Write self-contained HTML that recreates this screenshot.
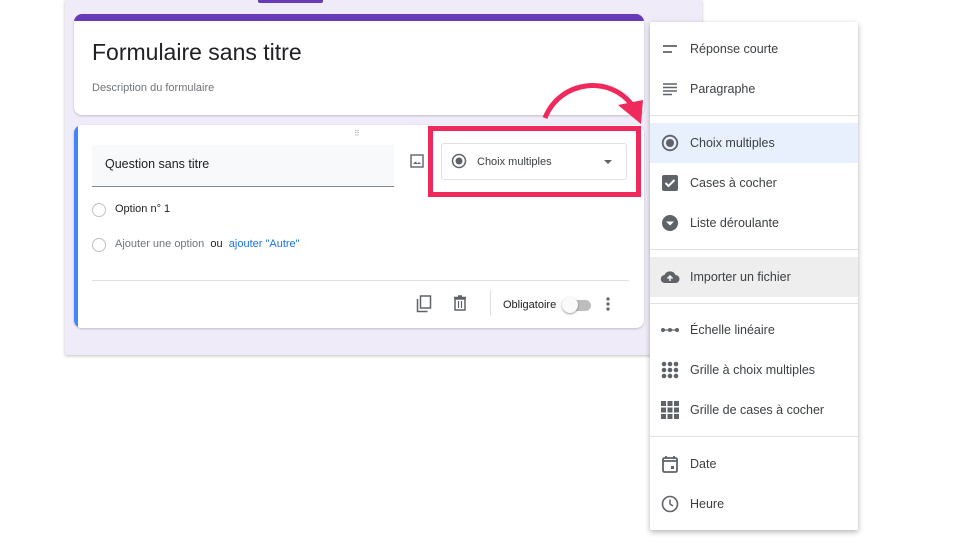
<!DOCTYPE html>
<html><head><meta charset="utf-8"><style>
*{margin:0;padding:0;box-sizing:border-box}
body{width:980px;height:551px;background:#fff;position:relative;overflow:hidden;font-family:"Liberation Sans",sans-serif;color:#202124}
.abs{position:absolute}
.panel{left:65px;top:0;width:637px;height:355px;background:#f0ebf8;box-shadow:0 1px 3px rgba(0,0,0,.25)}
.card{background:#fff;border-radius:8px;box-shadow:0 1px 2px rgba(0,0,0,.2)}
.mi{position:absolute;left:0;width:208px;height:40px;display:flex;align-items:center;font-size:12.5px;color:#3c4043}
.mi .ic{width:40px;display:flex;justify-content:center;margin-left:0}
.mi span{margin-left:0}
.div{position:absolute;left:0;width:208px;height:1px;background:#e0e0e0}
</style></head><body>
<div class="abs panel"></div>
<div class="abs" style="left:258px;top:0;width:65px;height:3px;background:#673ab7;border-radius:0 0 2px 2px"></div>
<div class="abs card" style="left:74px;top:14px;width:570px;height:101px;overflow:hidden">
  <div style="height:7px;background:#673ab7"></div>
  <div class="abs" style="left:18px;top:25px;font-size:23px;color:#202124">Formulaire sans titre</div>
  <div class="abs" style="left:18px;top:68px;font-size:11px;color:#70757a">Description du formulaire</div>
</div>
<div class="abs card" style="left:74px;top:125px;width:570px;height:203px;overflow:hidden">
  <div class="abs" style="left:0;top:0;width:4px;height:203px;background:#4285f4"></div>
  <div class="abs" style="left:280px;top:4px;font-size:8px;color:#aaa;letter-spacing:1px">⠿</div>
  <div class="abs" style="left:18px;top:20px;width:302px;height:42px;background:#f8f9fa;border-bottom:1px solid #80868b"></div>
  <div class="abs" style="left:31px;top:32px;font-size:12.5px;color:#202124">Question sans titre</div>
  <svg class="abs" style="left:336px;top:29px" width="14" height="14" viewBox="0 0 14 14"><rect x="1" y="1" width="12" height="12" fill="none" stroke="#5f6368" stroke-width="1.4"/><path d="M3 10l2.5-2.5 2 2 1.5-1.5 2 2z" fill="#5f6368"/></svg>
  <div class="abs" style="left:367px;top:18px;width:186px;height:37px;border:1px solid #e0e0e0;border-radius:3px"></div>
  <svg class="abs" style="left:377px;top:28px" width="16" height="16" viewBox="0 0 16 16"><circle cx="8" cy="8" r="6.5" fill="none" stroke="#5f6368" stroke-width="1.5"/><circle cx="8" cy="8" r="3.5" fill="#5f6368"/></svg>
  <div class="abs" style="left:403px;top:31px;font-size:11px;color:#3c4043">Choix multiples</div>
  <div class="abs" style="left:530px;top:35px;width:0;height:0;border-left:4px solid transparent;border-right:4px solid transparent;border-top:4px solid #5f6368"></div>
  <div class="abs" style="left:18px;top:78px;width:14px;height:14px;border:1.5px solid #bdc1c6;border-radius:50%"></div>
  <div class="abs" style="left:41px;top:78px;font-size:11px;color:#202124">Option n° 1</div>
  <div class="abs" style="left:18px;top:113px;width:14px;height:14px;border:1.5px solid #bdc1c6;border-radius:50%"></div>
  <div class="abs" style="left:41px;top:113px;font-size:11px;color:#70757a">Ajouter une option <span style="color:#202124">&nbsp;ou&nbsp;</span> <span style="color:#1a73e8">ajouter "Autre"</span></div>
  <div class="abs" style="left:18px;top:155px;width:537px;height:1px;background:#e0e0e0"></div>
  <svg class="abs" style="left:342px;top:170px" width="16" height="18" viewBox="0 0 16 18"><rect x="4.5" y="1" width="10" height="12" fill="none" stroke="#5f6368" stroke-width="1.5"/><path d="M1.5 4v12.5h10" fill="none" stroke="#5f6368" stroke-width="1.5"/></svg>
  <svg class="abs" style="left:379px;top:170px" width="14" height="16" viewBox="0 0 14 16"><path d="M2 4h10v11H2z M1 2.5h12 M5 1h4" fill="none" stroke="#5f6368" stroke-width="1.5"/><path d="M5.5 6v7M8.5 6v7" stroke="#5f6368" stroke-width="1.2"/></svg>
  <div class="abs" style="left:416px;top:165px;width:1px;height:26px;background:#e0e0e0"></div>
  <div class="abs" style="left:429px;top:174px;font-size:11px;color:#202124">Obligatoire</div>
  <div class="abs" style="left:491px;top:175px;width:26px;height:11px;border-radius:6px;background:#bdbdbd"></div>
  <div class="abs" style="left:488px;top:172px;width:16px;height:16px;border-radius:50%;background:#fafafa;box-shadow:0 1px 2px rgba(0,0,0,.4)"></div>
  <svg class="abs" style="left:531px;top:171px" width="6" height="16" viewBox="0 0 6 16"><circle cx="3" cy="3" r="1.6" fill="#5f6368"/><circle cx="3" cy="8" r="1.6" fill="#5f6368"/><circle cx="3" cy="13" r="1.6" fill="#5f6368"/></svg>
</div>
<div class="abs" style="left:428px;top:126px;width:213px;height:71px;border:5px solid #f0295c"></div>
<svg class="abs" style="left:530px;top:75px" width="125" height="60" viewBox="0 0 125 60"><path d="M15 43 C30 5, 80 0, 102 30" fill="none" stroke="#f0295c" stroke-width="5"/><path d="M88 30 L113 25 L111 49 Z" fill="#f0295c"/></svg>
<div class="abs" style="left:650px;top:22px;width:208px;height:508px;background:#fff;box-shadow:0 2px 6px rgba(0,0,0,.3);border-radius:2px">
  <div class="mi" style="top:7px"><div class="ic"><svg width="16" height="10"><path d="M1 2h14M1 8h9" stroke="#5f6368" stroke-width="1.8"/></svg></div>Réponse courte</div>
  <div class="mi" style="top:47px"><div class="ic"><svg width="16" height="14"><path d="M1 2h14M1 5.5h14M1 9h14M1 12.5h9" stroke="#5f6368" stroke-width="1.6"/></svg></div>Paragraphe</div>
  <div class="div" style="top:93px"></div>
  <div class="mi" style="top:101px;background:#e8f0fe"><div class="ic"><svg width="18" height="18"><circle cx="9" cy="9" r="7.3" fill="none" stroke="#5f6368" stroke-width="1.8"/><circle cx="9" cy="9" r="4" fill="#5f6368"/></svg></div>Choix multiples</div>
  <div class="mi" style="top:141px"><div class="ic"><svg width="18" height="18"><rect x="1" y="1" width="16" height="16" rx="2" fill="#5f6368"/><path d="M4.5 9l3 3 6-6" fill="none" stroke="#fff" stroke-width="2"/></svg></div>Cases à cocher</div>
  <div class="mi" style="top:181px"><div class="ic"><svg width="18" height="18"><circle cx="9" cy="9" r="8" fill="#5f6368"/><path d="M5 7.5h8l-4 4z" fill="#fff"/></svg></div>Liste déroulante</div>
  <div class="div" style="top:227px"></div>
  <div class="mi" style="top:235px;background:#eeeeee"><div class="ic"><svg width="20" height="14"><path d="M5 13a4 4 0 0 1 -.5-8A6 6 0 0 1 15.5 5 4 4 0 0 1 15.5 13z" fill="#5f6368"/><path d="M10 11V6M7.5 8.5L10 6l2.5 2.5" fill="none" stroke="#eee" stroke-width="1.6"/></svg></div>Importer un fichier</div>
  <div class="div" style="top:281px"></div>
  <div class="mi" style="top:288px"><div class="ic"><svg width="18" height="6"><path d="M1 3h16" stroke="#5f6368" stroke-width="1.2"/><circle cx="2" cy="3" r="2" fill="#5f6368"/><circle cx="9" cy="3" r="2" fill="#5f6368"/><circle cx="16" cy="3" r="2" fill="#5f6368"/></svg></div>Échelle linéaire</div>
  <div class="mi" style="top:328px"><div class="ic"><svg width="18" height="18" fill="#5f6368"><circle cx="3" cy="3" r="2.3"/><circle cx="9" cy="3" r="2.3"/><circle cx="15" cy="3" r="2.3"/><circle cx="3" cy="9" r="2.3"/><circle cx="9" cy="9" r="2.3"/><circle cx="15" cy="9" r="2.3"/><circle cx="3" cy="15" r="2.3"/><circle cx="9" cy="15" r="2.3"/><circle cx="15" cy="15" r="2.3"/></svg></div>Grille à choix multiples</div>
  <div class="mi" style="top:368px"><div class="ic"><svg width="18" height="18" fill="#5f6368"><rect x="0" y="0" width="5" height="5"/><rect x="6.5" y="0" width="5" height="5"/><rect x="13" y="0" width="5" height="5"/><rect x="0" y="6.5" width="5" height="5"/><rect x="6.5" y="6.5" width="5" height="5"/><rect x="13" y="6.5" width="5" height="5"/><rect x="0" y="13" width="5" height="5"/><rect x="6.5" y="13" width="5" height="5"/><rect x="13" y="13" width="5" height="5"/></svg></div>Grille de cases à cocher</div>
  <div class="div" style="top:414px"></div>
  <div class="mi" style="top:422px"><div class="ic"><svg width="16" height="18"><rect x="1" y="3" width="14" height="14" rx="1.5" fill="none" stroke="#5f6368" stroke-width="1.8"/><path d="M1 6h14M4 1v3M12 1v3" stroke="#5f6368" stroke-width="1.8"/><rect x="9" y="11" width="3" height="3" fill="#5f6368"/></svg></div>Date</div>
  <div class="mi" style="top:462px"><div class="ic"><svg width="18" height="18"><circle cx="9" cy="9" r="7.5" fill="none" stroke="#5f6368" stroke-width="1.6"/><path d="M9 4.5V9l3 2" fill="none" stroke="#5f6368" stroke-width="1.5"/></svg></div>Heure</div>
</div>
</body></html>
